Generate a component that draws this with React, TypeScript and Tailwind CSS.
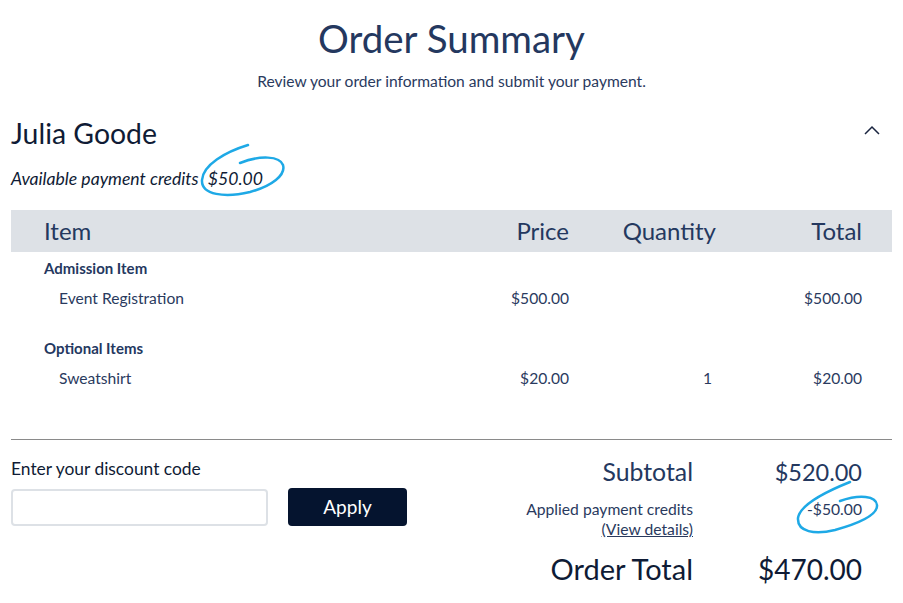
import React from "react";

export default function App() {
  return (
    <div
      className="relative w-[903px] h-[603px] bg-white overflow-hidden text-[#2a3a5e]"
      style={{ fontFamily: "Lato, 'Noto Sans', sans-serif" }}
    >
      <div className="pt-[14px] text-center">
        <h1 className="text-[38.5px] leading-[48px] text-[#24385f]">Order Summary</h1>
        <p className="mt-[9px] text-[15.6px] leading-[20px] text-[#2a3a5e]">
          Review your order information and submit your payment.
        </p>
      </div>

      <div className="px-[11px] mt-[24px]">
        <div className="flex items-center justify-between h-[36px]">
          <h2 className="text-[28.4px] text-[#0f1b35]">Julia Goode</h2>
          <svg width="20" height="14" viewBox="0 0 20 14" className="mr-[10px] mb-[6px]">
            <path d="M3 11 L10 4 L17 11" fill="none" stroke="#1a2540" strokeWidth="1.5" />
          </svg>
        </div>
        <p className="mt-[18px] italic text-[17.6px] leading-[20px] text-[#0f1b35] whitespace-nowrap">
          Available payment credits <span className="ml-[5px]">$50.00</span>
        </p>

        <div className="mt-[21px] bg-[#dde1e6] h-[42px] grid grid-cols-[405px_120px_147px_146px] pl-[33px] items-center text-[24px] text-[#24385f]">
          <div>Item</div>
          <div className="text-right">Price</div>
          <div className="text-right">Quantity</div>
          <div className="text-right">Total</div>
        </div>

        <div className="pl-[33px] text-[15.6px] text-[#2a3a5e]">
          <div className="mt-[6px] h-[20px] leading-[20px] font-bold text-[15px] text-[#24385f]">Admission Item</div>
          <div className="mt-[10px] h-[20px] leading-[20px] grid grid-cols-[405px_120px_147px_146px]">
            <div className="pl-[15px]">Event Registration</div>
            <div className="text-right">$500.00</div>
            <div className="text-right"></div>
            <div className="text-right">$500.00</div>
          </div>
          <div className="mt-[30px] h-[20px] leading-[20px] font-bold text-[15px] text-[#24385f]">Optional Items</div>
          <div className="mt-[10px] h-[20px] leading-[20px] grid grid-cols-[405px_120px_147px_146px]">
            <div className="pl-[15px]">Sweatshirt</div>
            <div className="text-right">$20.00</div>
            <div className="text-right pr-[4px]">1</div>
            <div className="text-right">$20.00</div>
          </div>
        </div>

        <div className="mt-[51px] h-px bg-[#8a8a8a]" />

        <div className="flex mt-[16px]">
          <div className="w-[520px]">
            <div className="text-[17.4px] leading-[22px] text-[#0f1b35] mt-[2px]">Enter your discount code</div>
            <div className="flex items-center mt-[8px] gap-[20px]">
              <input className="w-[257px] h-[37px] border-2 border-[#dde1e6] rounded-[4px] outline-none" />
              <button className="w-[119px] h-[38px] bg-[#05142f] rounded-[4px] text-white text-[19px]">Apply</button>
            </div>
          </div>
          <div className="flex-1 pr-[30px] grid grid-cols-[1fr_169px] text-right">
            <div className="text-[24.8px] leading-[32px] text-[#24385f]">Subtotal</div>
            <div className="text-[23.5px] leading-[32px] text-[#24385f]">$520.00</div>
            <div className="mt-[11px] text-[15.7px] leading-[20px] text-[#2a3a5e] whitespace-nowrap">
              Applied payment credits
              <br />
              <span className="underline">(View details)</span>
            </div>
            <div className="mt-[11px] text-[15.7px] leading-[20px] text-[#2a3a5e]">-$50.00</div>
            <div className="mt-[11px] text-[29px] leading-[38px] text-[#0f1b35]">Order Total</div>
            <div className="mt-[11px] text-[28px] leading-[38px] text-[#0f1b35]">$470.00</div>
          </div>
        </div>
      </div>

      <svg className="absolute left-0 top-0 pointer-events-none" width="903" height="603">
        <path
          d="M248,145 C225,152 203,165 202,180 C201,195 225,198 250,192 C272,186 286,175 283,165 C280,156 260,155 240,163"
          fill="none"
          stroke="#1ea9e6"
          strokeWidth="2.5"
          strokeLinecap="round"
        />
        <path
          d="M850,482 C825,492 800,505 798,518 C797,532 815,535 835,530 C860,523 878,515 877,505 C876,496 860,494 840,501"
          fill="none"
          stroke="#1ea9e6"
          strokeWidth="2.5"
          strokeLinecap="round"
        />
      </svg>
    </div>
  );
}
